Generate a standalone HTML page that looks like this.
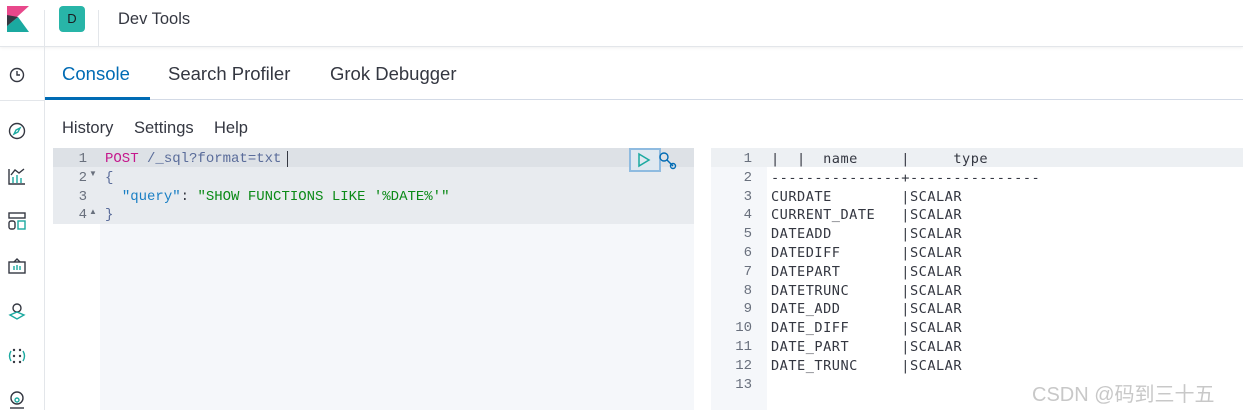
<!DOCTYPE html>
<html><head><meta charset="utf-8"><style>
*{margin:0;padding:0;box-sizing:border-box}
body{width:1243px;height:410px;overflow:hidden;background:#fff;font-family:"Liberation Sans",sans-serif;position:relative}
.abs{position:absolute}
.mono{font-family:"Liberation Mono",monospace;font-size:14px;line-height:18.8px;white-space:pre}
</style></head><body>
<!-- header -->
<div class="abs" style="left:0;top:0;width:1243px;height:47px;border-bottom:1px solid #e3e6ea;box-shadow:0 1px 3px rgba(0,0,0,.06)"></div>
<svg class="abs" style="left:7px;top:6px" width="22" height="26" viewBox="0 0 22 26">
<polygon points="0,0 22,0 0,20" fill="#e8488b"/>
<polygon points="0,20 11,11 22,26 0,26" fill="#1ba9a0"/>
<polygon points="0,9 11,11 0,20" fill="#343741"/>
</svg>
<div class="abs" style="left:44px;top:10px;width:1px;height:36px;background:#e3e6ea"></div>
<div class="abs" style="left:59px;top:6px;width:26px;height:26px;background:#28b5a8;border-radius:4px;color:#1a1c21;font-size:13px;text-align:center;line-height:26px">D</div>
<div class="abs" style="left:98px;top:10px;width:1px;height:36px;background:#e3e6ea"></div>
<div class="abs" style="left:118px;top:10px;font-size:16.5px;color:#343741">Dev Tools</div>
<!-- sidebar -->
<div class="abs" style="left:44px;top:47px;width:1px;height:363px;background:#e3e6ea"></div>
<div class="abs" style="left:0;top:100px;width:44px;height:1px;background:#e3e6ea"></div>
<svg class="abs" style="left:8px;top:66px" width="18" height="18" viewBox="0 0 18 18" fill="none" stroke="#343741" stroke-width="1.4"><circle cx="9" cy="9" r="6.5"/><path d="M9 5v4h3"/></svg>
<svg class="abs" style="left:7px;top:121px" width="20" height="20" viewBox="0 0 20 20" fill="none" stroke="#343741" stroke-width="1.4"><circle cx="10" cy="10" r="7.5"/><path d="M13 7l-4 2-2 4 4-2z" stroke="#1ba9a0"/></svg>
<svg class="abs" style="left:7px;top:166px" width="20" height="20" viewBox="0 0 20 20" fill="none" stroke="#343741" stroke-width="1.4"><path d="M2 3v15h16"/><path d="M6 17v-6M10 17v-8M14 17v-5" stroke="#1ba9a0"/><path d="M4 9l4-5 4 3 5-4"/></svg>
<svg class="abs" style="left:7px;top:211px" width="20" height="20" viewBox="0 0 20 20" fill="none" stroke="#343741" stroke-width="1.4"><rect x="2" y="2" width="16" height="5"/><rect x="2" y="10" width="6" height="8" rx="2"/><rect x="11" y="10" width="7" height="8" stroke="#1ba9a0"/></svg>
<svg class="abs" style="left:7px;top:256px" width="20" height="20" viewBox="0 0 20 20" fill="none" stroke="#343741" stroke-width="1.4"><rect x="2" y="6" width="16" height="11"/><path d="M7 6l3-3 3 3"/><path d="M7 10v4M10 9v5M13 10v4" stroke="#1ba9a0"/></svg>
<svg class="abs" style="left:7px;top:301px" width="20" height="20" viewBox="0 0 20 20" fill="none" stroke="#343741" stroke-width="1.4"><circle cx="10" cy="7" r="4"/><path d="M3 14l7 4 7-4-7-3z" stroke="#1ba9a0" fill="none"/></svg>
<svg class="abs" style="left:7px;top:346px" width="20" height="20" viewBox="0 0 20 20" fill="#343741" stroke="#1ba9a0" stroke-width="1.4"><circle cx="7" cy="4" r="1.2" stroke="none"/><circle cx="13" cy="4" r="1.2" stroke="none"/><circle cx="7" cy="10" r="1.2" stroke="none"/><circle cx="13" cy="10" r="1.2" stroke="none"/><circle cx="7" cy="16" r="1.2" stroke="none"/><circle cx="13" cy="16" r="1.2" stroke="none"/><path d="M4 5q-3 5 0 10M16 5q3 5 0 10" fill="none"/></svg>
<svg class="abs" style="left:7px;top:390px" width="20" height="20" viewBox="0 0 20 20" fill="none" stroke="#343741" stroke-width="1.4"><circle cx="10" cy="8" r="6"/><path d="M3 18h14"/><circle cx="10" cy="10" r="2" stroke="#1ba9a0"/></svg>
<!-- tabs -->
<div class="abs" style="left:45px;top:99px;width:1198px;height:1px;background:#d3dae6"></div>
<div class="abs" style="left:62px;top:63px;font-size:18.5px;color:#006bb4">Console</div>
<div class="abs" style="left:45px;top:97px;width:105px;height:3px;background:#006bb4"></div>
<div class="abs" style="left:168px;top:63px;font-size:18.5px;color:#343741">Search Profiler</div>
<div class="abs" style="left:330px;top:63px;font-size:18.5px;color:#343741">Grok Debugger</div>
<div class="abs" style="left:62px;top:119px;font-size:16.5px;color:#343741">History</div>
<div class="abs" style="left:134px;top:119px;font-size:16.5px;color:#343741">Settings</div>
<div class="abs" style="left:214px;top:119px;font-size:16.5px;color:#343741">Help</div>
<!-- left editor -->
<div class="abs" style="left:53px;top:148px;width:641px;height:262px;background:#f5f7fa"></div>
<div class="abs" style="left:53px;top:148px;width:47px;height:262px;background:#fff"></div>
<div class="abs" style="left:53px;top:148px;width:641px;height:76px;background:#e8ebef"></div>
<div class="abs" style="left:53px;top:148px;width:641px;height:19px;background:#dde1e6"></div>
<div class="abs mono" style="left:60px;top:150px;color:#69707d;text-align:right;width:27px">1
2
3
4</div>
<div class="abs" style="left:89px;top:169px;font-size:8px;color:#69707d">▼</div>
<div class="abs" style="left:89px;top:207px;font-size:8px;color:#69707d">▲</div>
<div class="abs mono" style="left:105px;top:150px;color:#343741"><span style="color:#c5178c">POST</span> <span style="color:#5a6c9a">/_sql?format=txt</span>
<span style="color:#5a6c9a">{</span>
  <span style="color:#1a7fc4">"query"</span>: <span style="color:#0b8a17">"SHOW FUNCTIONS LIKE '%DATE%'"</span>
<span style="color:#5a6c9a">}</span></div>
<div class="abs" style="left:287px;top:151px;width:1px;height:16px;background:#343741"></div>
<div class="abs" style="left:629px;top:148px;width:32px;height:24px;border:2px solid #8fbbe0;background:#dfe8f0"></div>
<svg class="abs" style="left:637px;top:152px" width="14" height="16" viewBox="0 0 14 16"><path d="M2 2l10 6-10 6z" fill="none" stroke="#1ba9a0" stroke-width="1.5"/></svg>
<svg class="abs" style="left:658px;top:151px" width="20" height="20" viewBox="0 0 20 20" fill="none" stroke="#006bb4" stroke-width="1.4"><circle cx="6" cy="6" r="4"/><path d="M9 9l6 6"/><circle cx="15" cy="15" r="2.5"/></svg>
<!-- right -->
<div class="abs" style="left:711px;top:148px;width:56px;height:262px;background:#f5f7fa"></div>
<div class="abs" style="left:711px;top:148px;width:532px;height:19px;background:#edf0f3"></div>
<div class="abs mono" style="left:716px;top:150px;color:#69707d;text-align:right;width:36px">1
2
3
4
5
6
7
8
9
10
11
12
13</div>
<div class="abs mono" style="left:771px;top:150px;color:#343741;font-family:'DejaVu Sans Mono','Liberation Mono',monospace;font-size:13.6px;letter-spacing:0.5px">|  |  name     |     type
---------------+---------------
CURDATE        |SCALAR
CURRENT_DATE   |SCALAR
DATEADD        |SCALAR
DATEDIFF       |SCALAR
DATEPART       |SCALAR
DATETRUNC      |SCALAR
DATE_ADD       |SCALAR
DATE_DIFF      |SCALAR
DATE_PART      |SCALAR
DATE_TRUNC     |SCALAR</div>
<div class="abs" style="left:1032px;top:378px;font-size:20px;color:#c8c8c8;font-family:'Liberation Sans','Noto Sans CJK SC',sans-serif">CSDN @码到三十五</div>
</body></html>
